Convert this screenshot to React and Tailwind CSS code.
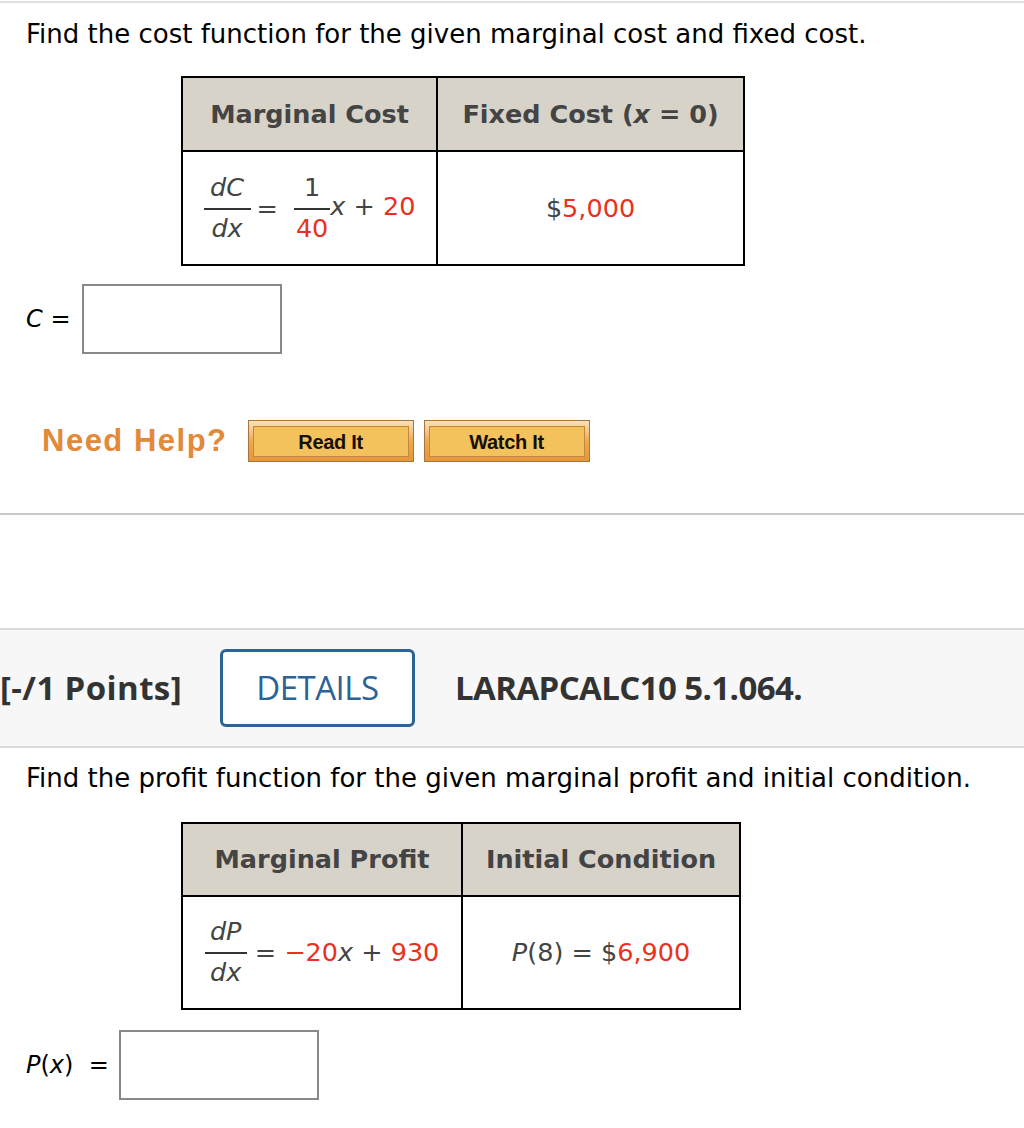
import React from 'react';

const RED = 'text-[#e8321f]';

function Frac({ top, bottom, width }) {
  return (
    <span className="inline-flex flex-col items-center">
      <span className="leading-none pb-[8px] px-[2px]">{top}</span>
      <span className={`border-t-2 border-[#333] ${width}`} />
      <span className="leading-none pt-[6px] px-[2px]">{bottom}</span>
    </span>
  );
}

function HelpButton({ label }) {
  return (
    <div className="w-[166px] h-[42px] border border-[#a8743a] bg-gradient-to-b from-[#f9e2b8] via-[#eeaa50] to-[#e6963c] px-[4px] pt-[5px] pb-[4px]">
      <div className="h-full border border-[#c4873c] bg-[#f3c25d] flex items-center justify-center font-['Liberation_Sans',Arial,sans-serif] font-bold text-[20px] text-[#151006] tracking-[-0.3px]">
        {label}
      </div>
    </div>
  );
}

export default function App() {
  return (
    <div className="w-[1024px] min-h-[1128px] bg-white font-['DejaVu_Sans',Verdana,sans-serif]">
      <div className="pt-px">
        <div className="border-t-2 border-[#e0e0e0]" />
      </div>

      {/* QUESTION 1 */}
      <p className="ml-[26px] mt-[15px] text-[26px] leading-[32px] text-black">
        Find the cost function for the given marginal cost and fixed cost.
      </p>

      <div className="ml-[181px] mt-[26px] w-[564px] border-2 border-black text-[#444]">
        <div className="grid grid-cols-[255px_1fr] bg-[#d7d3c9] border-b-2 border-black h-[74px] font-bold text-[25.5px]">
          <div className="border-r-2 border-black flex items-center justify-center">Marginal Cost</div>
          <div className="flex items-center justify-center">
            Fixed Cost (<span className="italic">x</span>&nbsp;=&nbsp;0)
          </div>
        </div>
        <div className="grid grid-cols-[255px_1fr] h-[112px] text-[25.5px]">
          <div className="border-r-2 border-black flex items-center justify-center">
            <Frac top={<span className="italic">dC</span>} bottom={<span className="italic">dx</span>} width="w-[47px]" />
            <span className="ml-[6px] mr-[16px]">=</span>
            <Frac top="1" bottom={<span className={RED}>40</span>} width="w-[36px]" />
            <span className="mt-[-4px]">
              <span className="italic">x</span> + <span className={RED}>20</span>
            </span>
          </div>
          <div className="flex items-center justify-center">
            $<span className={RED}>5,000</span>
          </div>
        </div>
      </div>

      <div className="flex items-center mt-[18px]">
        <span className="ml-[26px] w-[56px] text-[24px] text-black"><span className="italic">C</span> =</span>
        <div className="w-[200px] h-[70px] border-2 border-[#888] bg-white" />
      </div>

      <div className="flex items-center mt-[64px] ml-[42px]">
        <span className="font-['Liberation_Sans',Arial,sans-serif] font-bold text-[31px] text-[#e2893a] tracking-[1.5px] mr-[20px]">
          Need Help?
        </span>
        <HelpButton label="Read It" />
        <div className="w-[10px]" />
        <HelpButton label="Watch It" />
      </div>

      <div className="mt-[48px] border-t-2 border-[#c9c9c9]" />

      {/* QUESTION 2 HEADER */}
      <div className="mt-[113px] border-t-2 border-b-2 border-[#dcdcdc] bg-[#f7f7f7] h-[120px] flex items-center font-['Open_Sans',sans-serif]">
        <span className="font-bold text-[33px] text-[#333] tracking-[0.4px]">[-/1 Points]</span>
        <div className="ml-[38px] w-[195px] h-[78px] border-[3px] border-[#2c6396] rounded-[6px] bg-white flex items-center justify-center text-[#2c6396] text-[33px] tracking-[-0.5px]">
          DETAILS
        </div>
        <span className="ml-[40px] font-bold text-[33px] text-[#333] tracking-[-0.6px]">LARAPCALC10 5.1.064.</span>
      </div>

      <p className="ml-[26px] mt-[14px] text-[26px] leading-[32px] text-black">
        Find the profit function for the given marginal profit and initial condition.
      </p>

      <div className="ml-[181px] mt-[28px] w-[560px] border-2 border-black text-[#444]">
        <div className="grid grid-cols-[280px_1fr] bg-[#d7d3c9] border-b-2 border-black h-[73px] font-bold text-[25.5px]">
          <div className="border-r-2 border-black flex items-center justify-center">Marginal Profit</div>
          <div className="flex items-center justify-center">Initial Condition</div>
        </div>
        <div className="grid grid-cols-[280px_1fr] h-[111px] text-[25.5px]">
          <div className="border-r-2 border-black flex items-center justify-center">
            <Frac top={<span className="italic">dP</span>} bottom={<span className="italic">dx</span>} width="w-[42px]" />
            <span className="ml-[8px]">
              = <span className={RED}>−20</span><span className="italic">x</span> + <span className={RED}>930</span>
            </span>
          </div>
          <div className="flex items-center justify-center">
            <span className="italic">P</span>(8) = $<span className={RED}>6,900</span>
          </div>
        </div>
      </div>

      <div className="flex items-center mt-[20px]">
        <span className="ml-[26px] w-[93px] text-[24px] text-black"><span className="italic">P</span>(<span className="italic">x</span>)&nbsp; =</span>
        <div className="w-[200px] h-[70px] border-2 border-[#888] bg-white" />
      </div>
    </div>
  );
}
